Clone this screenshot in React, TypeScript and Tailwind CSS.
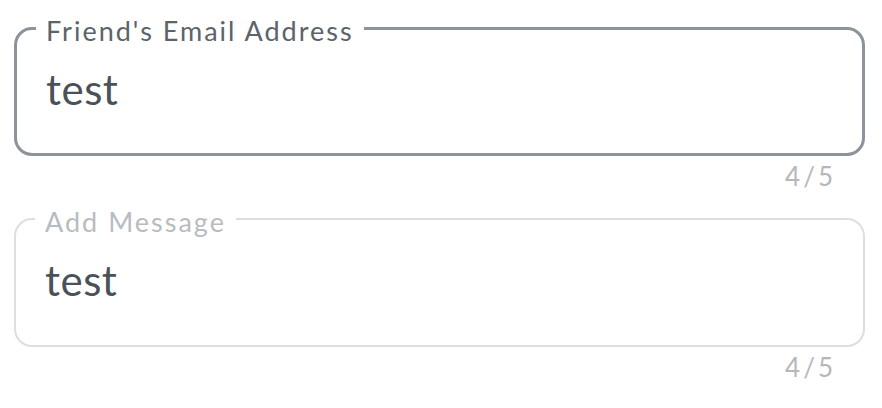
import { useState } from 'react'

type FieldProps = {
    label: string
    value: string
    max: number
    focused?: boolean
    onChange: (v: string) => void
}

function CountedField({ label, value, max, focused, onChange }: FieldProps) {
    return (
        <div className="w-full">
            <fieldset
                className={`m-0 h-[144px] rounded-[18px] px-[19px] py-0 ${focused ? 'border-[3px] border-[#8c939a]' : 'border-2 border-[#dcdee1]'}`}
            >
                {/* legend sits on the border; text nudged below centre like the ref */}
                <legend
                    className={`px-[10px] pt-[5px] text-[27px] leading-[27px] tracking-[2px] ${focused ? 'text-[#5c636b]' : 'text-[#b8bcc1]'}`}
                >
                    {label}
                </legend>
                <input
                    value={value}
                    onChange={e => onChange(e.target.value.slice(0, max))}
                    className="mt-[20px] block w-full bg-transparent px-[10px] text-[42px] leading-[50px] tracking-[0.5px] text-[#4a5159] outline-none"
                />
            </fieldset>
            <div className="mt-[4px] pr-[29px] text-right text-[26px] leading-[32px] tracking-[3px] text-[#b4b8bd]">
                {value.length}/{max}
            </div>
        </div>
    )
}

export default function App() {
    const [email, setEmail] = useState('test')
    const [message, setMessage] = useState('test')

    return (
        <div
            className="h-[408px] w-[882px] bg-white pl-[14px] pr-[17px] pt-[12px]"
            style={{ fontFamily: 'Lato, "Open Sans", sans-serif' }}
        >
            <CountedField label="Friend's Email Address" value={email} max={5} focused onChange={setEmail} />
            <div className="mt-[11px]">
                <CountedField label="Add Message" value={message} max={5} onChange={setMessage} />
            </div>
        </div>
    )
}
